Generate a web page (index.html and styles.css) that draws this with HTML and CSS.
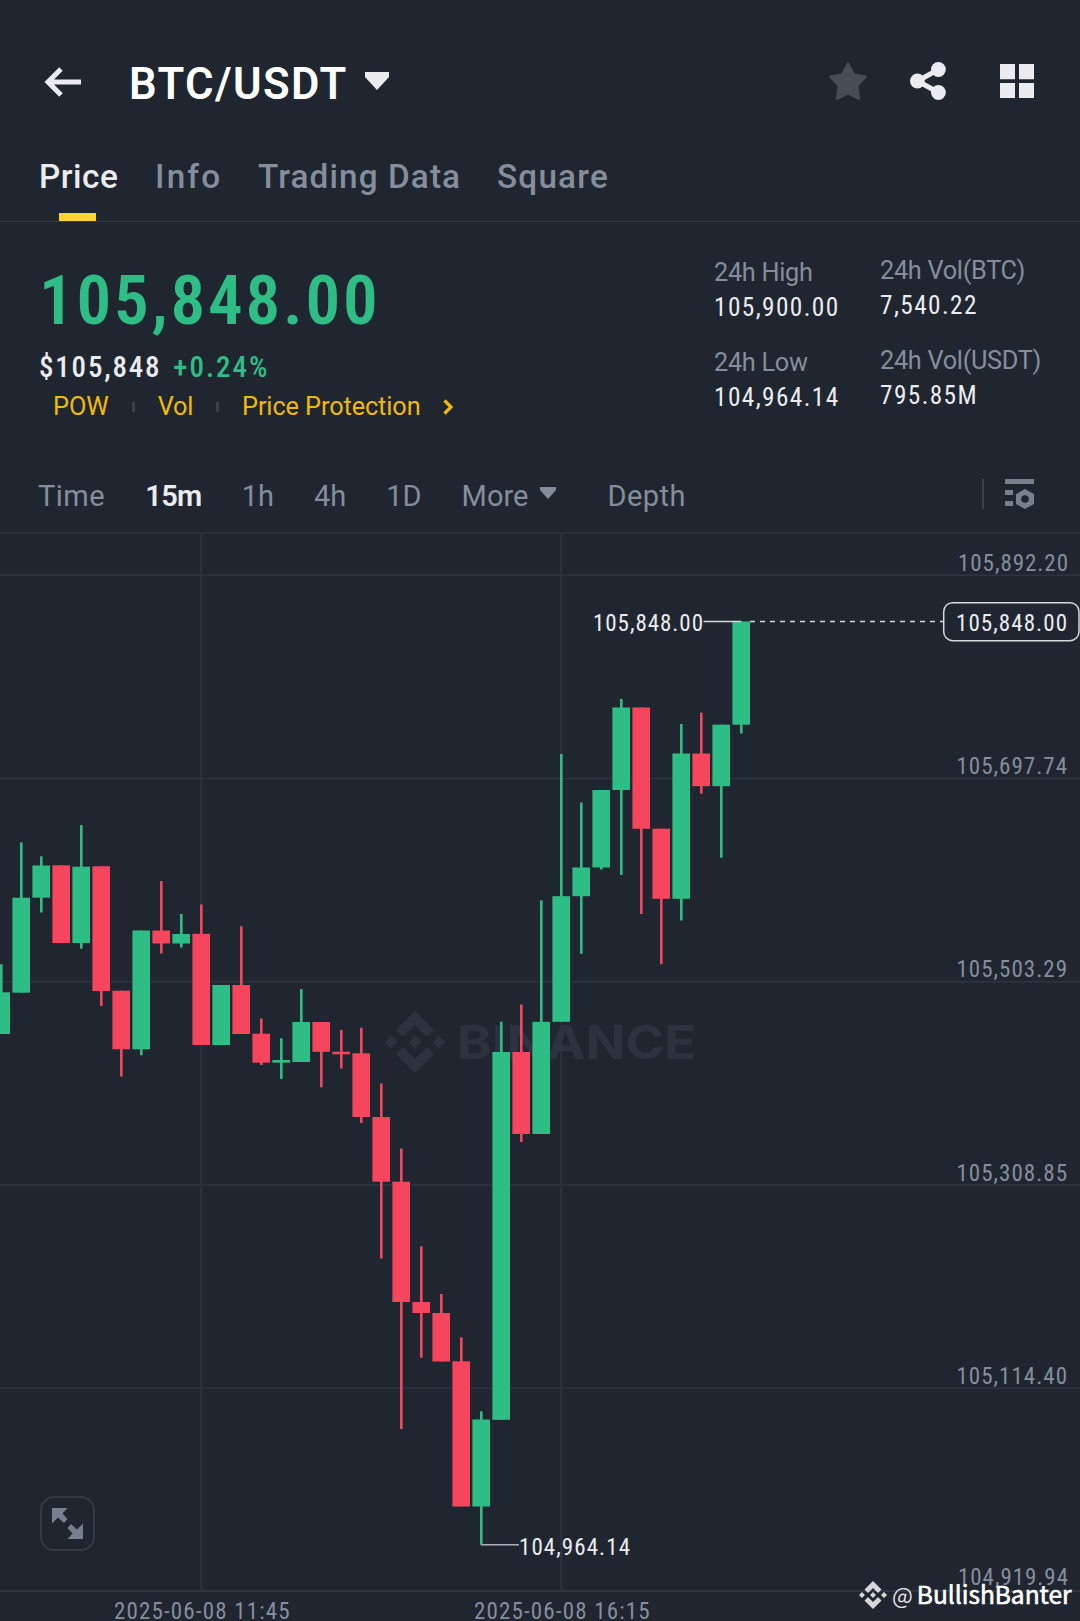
FILE: index.html
```html
<!DOCTYPE html>
<html lang="en">
<head>
    <meta charset="UTF-8">
    <meta name="viewport" content="width=device-width, initial-scale=1.0">
    <title>BTC/USDT</title>
    <link rel="stylesheet" href="styles.css">
</head>
<body>
    <header class="header">
        <svg class="back" width="38" height="30" viewBox="0 0 38 30">
            <path d="M17 2 L4 15 L17 28 M4 15 H37" fill="none" stroke="#eaecef" stroke-width="5"/>
        </svg>
        <h1 class="pair">BTC/USDT</h1>
        <svg class="pair-caret" width="24" height="18" viewBox="0 0 24 18">
            <path d="M0 0 H24 V5 L12 18 L0 5 Z" fill="#eaecef"/>
        </svg>
        <div class="header-icons">
            <svg width="38" height="39" viewBox="0 0 38 39">
                <path d="M19 1.5 L24.8 12.6 L36.6 14.6 L28.2 23.6 L30 36.6 L19 31.2 L8 36.6 L9.8 23.6 L1.4 14.6 L13.2 12.6 Z" fill="#474d57" stroke="#474d57" stroke-width="2.4" stroke-linejoin="round"/>
            </svg>
            <svg width="36" height="38" viewBox="0 0 36 38">
                <path d="M28.5 7.5 L7.5 19 L28.5 30.5" fill="none" stroke="#eaecef" stroke-width="5"/>
                <circle cx="28.4" cy="7.5" r="7.4" fill="#eaecef"/>
                <circle cx="7.4" cy="19" r="7.4" fill="#eaecef"/>
                <circle cx="28.4" cy="30.5" r="7.4" fill="#eaecef"/>
            </svg>
            <svg width="34" height="34" viewBox="0 0 34 34">
                <path d="M0 0 H15 V15.3 H0 Z M19 0 H34 V15.3 H19 Z M0 18.9 H15 V34 H0 Z M19 18.9 H34 V34 H19 Z" fill="#eaecef"/>
            </svg>
        </div>
    </header>

    <nav class="tabs">
        <a class="tab tab-price active">Price</a>
        <a class="tab tab-info">Info</a>
        <a class="tab tab-data">Trading Data</a>
        <a class="tab">Square</a>
    </nav>

    <section class="summary">
        <div class="quote">
            <div class="last-price">105,848.00</div>
            <div class="fiat">
                <span class="usd">$105,848</span>
                <span class="change">+0.24%</span>
            </div>
            <div class="tags">
                <span class="pow">POW</span>
                <i class="sep"></i>
                <span class="vol">Vol</span>
                <i class="sep"></i>
                <span class="protection">Price Protection</span>
                <svg width="10" height="16" viewBox="0 0 10 16">
                    <path d="M1.5 1.500 L8 8 L1.500 14.500" fill="none" stroke="#f0b90b" stroke-width="3.2"/>
                </svg>
            </div>
        </div>
        <dl class="stats stats-range">
            <dt>24h High</dt>
            <dd>105,900.00</dd>
            <dt>24h Low</dt>
            <dd>104,964.14</dd>
        </dl>
        <dl class="stats stats-volume">
            <dt>24h Vol(BTC)</dt>
            <dd>7,540.22</dd>
            <dt>24h Vol(USDT)</dt>
            <dd>795.85M</dd>
        </dl>
    </section>

    <div class="intervals">
        <span>Time</span>
        <span class="active">15m</span>
        <span>1h</span>
        <span>4h</span>
        <span>1D</span>
        <span class="more">More
            <svg width="16" height="12" viewBox="0 0 16 12">
                <path d="M0 0 H16 V3 L8 12 L0 3 Z" fill="#848e9c"/>
            </svg>
        </span>
        <span class="depth">Depth</span>
        <div class="settings">
            <i class="divider"></i>
            <svg width="29" height="30" viewBox="0 0 29 30">
                <path d="M0 0 H29 V5 H0 Z M0 11 H8 V16 H0 Z M0 22 H8 V27 H0 Z" fill="#76808f"/>
                <path fill-rule="evenodd" d="M20 10 L29 15 V25 L20 30 L11 25 V15 Z M20 16.2 A3.8 3.8 0 1 0 20 23.8 A3.8 3.8 0 1 0 20 16.2 Z" fill="#76808f"/>
            </svg>
        </div>
    </div>

    <main class="chart">
        <svg id="chart" width="1080" height="1087" viewBox="0 534 1080 1087">
            <g id="grid" class="grid"></g>

            <g class="brand">
                <path d="M415 1011 L434 1030 L427 1037 L415 1025 L403 1037 L396 1030 Z M415 1073 L434 1054 L427 1047 L415 1059 L403 1047 L396 1054 Z"/>
                <path d="M391 1035.500 L397.500 1042 L391 1048.500 L384.500 1042 Z M415 1035.500 L421.500 1042 L415 1048.500 L408.500 1042 Z M439 1035.500 L445.500 1042 L439 1048.500 L432.500 1042 Z"/>
                <text x="457" y="1059" textLength="239" lengthAdjust="spacingAndGlyphs">BINANCE</text>
            </g>

            <g id="candles"></g>

            <g class="marks">
                <path d="M703.500 621.500 H741"/>
                <path d="M750 621.500 H943" stroke-dasharray="5 5"/>
                <path class="low" d="M481 1544.700 H519"/>
                <rect x="943.700" y="602.700" width="135.300" height="38" rx="9"/>
                <text x="593" y="630.500" textLength="110">105,848.00</text>
                <text x="956" y="630.500" textLength="111">105,848.00</text>
                <text x="519" y="1554.500" textLength="111">104,964.14</text>
            </g>

            <g class="axis">
                <text x="958" y="570.500" textLength="110">105,892.20</text>
                <text x="956.500" y="773.800" textLength="110.500">105,697.74</text>
                <text x="956.500" y="977.200" textLength="110.500">105,503.29</text>
                <text x="956.500" y="1180.500" textLength="110.500">105,308.85</text>
                <text x="956.500" y="1383.500" textLength="110.500">105,114.40</text>
                <text x="958" y="1584.500" textLength="110">104,919.94</text>
                <text x="114" y="1619" textLength="175.500">2025-06-08 11:45</text>
                <text x="474" y="1619" textLength="175.500">2025-06-08 16:15</text>
            </g>
        </svg>

        <button class="expand" aria-label="Full screen">
            <svg width="31" height="31" viewBox="0 0 31 31">
                <path d="M0 0 H15.500 L10.500 5.500 L15.500 11 L12 15 L6 9.500 L0 15.500 Z M31 31 H15.500 L20.500 25.500 L15.500 20 L19 16 L25 21.500 L31 15.500 Z" fill="#76808f"/>
            </svg>
        </button>

        <div class="author">
            <svg width="28" height="28" viewBox="0 0 28 28">
                <path d="M14 0 L22.500 8.500 L19 12 L14 7 L9 12 L5.500 8.500 Z M14 28 L22.500 19.500 L19 16 L14 21 L9 16 L5.500 19.500 Z M3 11 L6 14 L3 17 L0 14 Z M14 11 L17 14 L14 17 L11 14 Z M25 11 L28 14 L25 17 L22 14 Z" fill="#d6d7d9"/>
            </svg>
            <span class="at">@</span>
            <span class="name">BullishBanter</span>
        </div>
    </main>

    <script>
        // [up, body top, body bottom, wick top, wick bottom]
        const candles = [
            [1, 992.3, 1034, 964.3, 1034],
            [1, 897.7, 992.7, 842.3, 992.7],
            [1, 865.5, 897.7, 856.3, 912.5],
            [0, 865.3, 943, 865.3, 943],
            [1, 866.7, 943, 825, 948.7],
            [0, 866.3, 991, 866.3, 1006],
            [0, 990.7, 1049.3, 990.7, 1076.5],
            [1, 930.5, 1049.3, 930.5, 1055.3],
            [0, 930.5, 943.5, 881, 953.5],
            [1, 934, 943.5, 914, 947.5],
            [0, 933.8, 1045, 904.5, 1045],
            [1, 985, 1045, 985, 1045],
            [0, 985, 1034, 926.3, 1034],
            [0, 1033.7, 1062.7, 1018.5, 1065],
            [1, 1060, 1062.7, 1038.3, 1079],
            [1, 1022, 1062, 989, 1062],
            [0, 1022, 1051.8, 1022, 1087.3],
            [0, 1051.7, 1054.3, 1030, 1068.7],
            [0, 1053.3, 1117, 1027.7, 1123],
            [0, 1117, 1181.7, 1083.3, 1258.5],
            [0, 1181.7, 1302, 1148.5, 1429],
            [0, 1302, 1313, 1246.3, 1357.7],
            [0, 1313, 1361.5, 1294, 1361.5],
            [0, 1361.3, 1506.5, 1337.3, 1506.5],
            [1, 1419.5, 1506.5, 1411.3, 1544.7],
            [1, 1052, 1419.8, 1021.7, 1419.8],
            [0, 1052, 1134, 1004.5, 1142],
            [1, 1021.8, 1134, 900.3, 1134],
            [1, 896.2, 1021.8, 754, 1021.8],
            [1, 867.5, 896.2, 802.5, 953.8],
            [1, 790, 867.5, 790, 869.5],
            [1, 707.5, 790, 699, 875],
            [0, 707.5, 828.8, 707.5, 914],
            [0, 828.7, 898.8, 828.7, 964.2],
            [1, 753.5, 898.8, 724, 920.5],
            [0, 753.5, 786.2, 712.7, 793.7],
            [1, 724.7, 786.2, 724.7, 857.7],
            [1, 621.5, 724.7, 621.5, 733.5]
        ];

        const svgNS = "http://www.w3.org/2000/svg";

        function addRect(parent, x, y, width, height, className) {
            const rect = document.createElementNS(svgNS, "rect");
            rect.setAttribute("x", x);
            rect.setAttribute("y", y);
            rect.setAttribute("width", width);
            rect.setAttribute("height", height);
            rect.setAttribute("class", className);
            parent.appendChild(rect);
        }

        const grid = document.getElementById("grid");
        [574.5, 777.8, 981, 1184.2, 1387.5].forEach(y => addRect(grid, 0, y, 1080, 1.5, "line"));
        [200.5, 560.5].forEach(x => addRect(grid, x, 534, 1.5, 1057, "line"));
        addRect(grid, 0, 1590, 1080, 2, "line");

        const group = document.getElementById("candles");
        candles.forEach(([up, top, bottom, high, low], i) => {
            const center = 1.3 + i * 20;
            const className = up ? "up" : "down";
            addRect(group, center - 1.3, high, 2.6, low - high, className);
            addRect(group, center - 8.9, top, 17.6, bottom - top, className);
        });
    </script>
</body>
</html>
```
FILE: styles.css
```css
* {
    box-sizing: border-box;
}
body {
    margin: 0;
    width: 1080px;
    height: 1621px;
    overflow: hidden;
    background-color: #202630;
    color: #eaecef;
    font-family: Roboto, "Liberation Sans", sans-serif;
}
svg {
    display: block;
    flex: none;
}
.header {
    display: flex;
    align-items: center;
    height: 144px;
    padding: 19px 46px 0 44px;
}
.pair {
    margin: 5px 0 0 47px;
    width: 234px;
    font-size: 43.6px;
    font-weight: 600;
    letter-spacing: 1.4px;
    color: #fff;
    white-space: nowrap;
}
.pair-caret {
    margin: -2px 0 0 2px;
}
.header-icons {
    display: flex;
    align-items: center;
    margin-left: auto;
}
.header-icons svg + svg {
    margin: -2px 0 0 43px;
}
.header-icons svg:last-child {
    margin-left: 54px;
}
.tabs {
    display: flex;
    height: 78px;
    padding-left: 39px;
    border-bottom: 1px solid #333b47;
    font-size: 33.3px;
    font-weight: 500;
    line-height: 65px;
    letter-spacing: 1.2px;
    color: #848e9c;
}
.tab {
    position: relative;
}
.tab-price {
    width: 116px;
    letter-spacing: 0.5px;
}
.tab-info {
    width: 103px;
    letter-spacing: 2.2px;
}
.tab-data {
    width: 239px;
    letter-spacing: 1.1px;
}
.tab.active {
    color: #eaecef;
}
.tab.active::after {
    content: "";
    position: absolute;
    left: 20px;
    bottom: 0;
    width: 37px;
    height: 8px;
    background-color: #fcd535;
}
.summary {
    display: flex;
    height: 238px;
    padding: 31px 0 0 39px;
}
.quote {
    width: 675px;
    padding-top: 8px;
}
.last-price {
    font-size: 69px;
    font-weight: 600;
    font-stretch: 87%;
    line-height: 80px;
    letter-spacing: 2.8px;
    color: #2ebd85;
}
.fiat {
    display: flex;
    gap: 12px;
    font-size: 29px;
    font-weight: 500;
    font-stretch: 87%;
    line-height: 52px;
    letter-spacing: 1.8px;
}
.change {
    letter-spacing: 2px;
    color: #2ebd85;
}
.tags {
    display: flex;
    align-items: center;
    padding: 1px 0 0 14px;
    font-size: 25.3px;
    line-height: 26px;
    color: #f0b90b;
}
.sep {
    width: 3px;
    height: 10px;
    margin: 0 23px;
    background-color: #3a424e;
}
.vol {
    letter-spacing: -0.3px;
}
.protection {
    margin-right: 22px;
    letter-spacing: -0.1px;
}
.stats {
    margin: 0;
    width: 166px;
    font-size: 25.3px;
    line-height: 35px;
    white-space: nowrap;
}
.stats-range {
    padding-top: 2px;
}
.stats dt {
    letter-spacing: -0.3px;
    color: #848e9c;
}
.stats dd {
    margin: 0 0 20px;
    font-stretch: 87%;
    letter-spacing: 1.4px;
}
.intervals {
    display: flex;
    align-items: center;
    gap: 40px;
    height: 74px;
    padding: 0 46px 0 38px;
    border-bottom: 2px solid #2b323d;
    font-size: 29px;
    color: #848e9c;
}
.intervals span:first-child {
    letter-spacing: 0.5px;
}
.intervals .active {
    font-weight: 600;
    letter-spacing: -0.6px;
    color: #eaecef;
}
.more {
    display: flex;
    align-items: center;
    gap: 12px;
    margin-right: 11px;
}
.more svg {
    margin-top: -6px;
}
.depth {
    letter-spacing: 0.5px;
}
.settings {
    display: flex;
    align-items: center;
    gap: 21px;
    margin: -5px 0 0 auto;
}
.divider {
    width: 2px;
    height: 30px;
    background-color: #3a424e;
}
.chart {
    position: relative;
    height: 1087px;
}
.line {
    fill: #2e3540;
}
.up {
    fill: #2ebd85;
}
.down {
    fill: #f6465d;
}
.brand {
    fill: #2d333e;
}
.brand text {
    font-family: Inter, sans-serif;
    font-size: 47px;
    font-weight: 700;
}
.marks path,
.marks rect {
    fill: none;
    stroke: #d5d8dc;
    stroke-width: 1.5;
}
.marks .low {
    stroke: #a9adb4;
}
.marks text,
.axis text {
    font-size: 23px;
    font-stretch: 87%;
    fill: #848e9c;
}
.marks text {
    fill: #eaecef;
}
.expand {
    position: absolute;
    left: 40px;
    top: 962px;
    display: flex;
    align-items: center;
    justify-content: center;
    width: 55px;
    height: 55px;
    padding: 0;
    border: 2px solid #343b46;
    border-radius: 14px;
    background: none;
}
.author {
    position: absolute;
    left: 859px;
    bottom: 10px;
    display: flex;
    align-items: center;
    height: 32px;
    font-family: "Noto Sans CJK SC", "Noto Sans", sans-serif;
    font-size: 24.5px;
    line-height: 32px;
    white-space: nowrap;
    color: #fff;
}
.author span {
    margin-top: -2px;
}
.author .at {
    margin-left: 5px;
    margin-right: 4px;
    font-size: 22px;
    color: #e2e3e5;
}
.name {
    -webkit-text-stroke: 0.6px #fff;
}
```
